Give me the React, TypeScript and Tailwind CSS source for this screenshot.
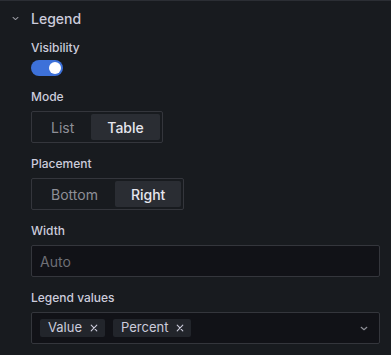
import React from "react";

function ChevronDown({ className }: { className?: string }) {
  return (
    <svg viewBox="0 0 10 6" className={className} fill="none" stroke="currentColor" strokeWidth={1.5} strokeLinecap="round" strokeLinejoin="round">
      <path d="M1.5 1.5 5 4.5 8.5 1.5" />
    </svg>
  );
}

function CloseIcon() {
  return (
    <svg viewBox="0 0 10 10" className="h-[8px] w-[8px]" fill="none" stroke="currentColor" strokeWidth={1.4} strokeLinecap="round">
      <path d="M1.5 1.5 8.5 8.5M8.5 1.5 1.5 8.5" />
    </svg>
  );
}

function Label({ children, tight }: { children: React.ReactNode; tight?: boolean }) {
  return (
    <div className={tight ? "mb-[4px] text-[12px] font-medium leading-[16px] text-[#ccccdc]" : "mb-[6px] text-[12px] font-medium leading-[16px] text-[#ccccdc]"}>
      {children}
    </div>
  );
}

function RadioGroup({ options, active }: { options: string[]; active: string }) {
  return (
    <div className="inline-flex h-[32px] items-center rounded-[2px] border border-[#34363c] p-[2px]">
      {options.map((o) => (
        <button
          key={o}
          type="button"
          className={
            o === active
              ? "h-[26px] rounded-[2px] bg-[#2a2d33] px-[16px] text-[14px] font-medium text-[#e6e6ee]"
              : "h-[26px] rounded-[2px] px-[17px] text-[14px] text-[#8e8f97]"
          }
        >
          {o}
        </button>
      ))}
    </div>
  );
}

function Chip({ label }: { label: string }) {
  return (
    <span className="flex h-[18px] items-center gap-[8px] rounded-[2px] bg-[#22252b] pl-[8px] pr-[7px] text-[13px] text-[#ccccdc]">
      {label}
      <CloseIcon />
    </span>
  );
}

export default function App() {
  return (
    <div className="h-[355px] w-[391px] overflow-hidden border-t border-[#2b2e34] bg-[#181b1f]" style={{ fontFamily: "Inter, 'Noto Sans', sans-serif" }}>
      <div className="flex h-[34px] items-center pl-[12px]">
        <ChevronDown className="h-[5px] w-[7px] text-[#9a9ba3]" />
        <span className="ml-[12px] text-[14px] font-medium text-[#ccccdc]">Legend</span>
      </div>

      <div className="flex flex-col gap-[13px] pl-[31px] pr-[11px] pt-[5px]">
        <div>
          <Label tight>Visibility</Label>
          <div className="flex h-[16px] w-[32px] items-center justify-end rounded-full bg-[#3d71d9] pr-[2px]">
            <span className="h-[12px] w-[12px] rounded-full bg-white" />
          </div>
        </div>

        <div>
          <Label>Mode</Label>
          <RadioGroup options={["List", "Table"]} active="Table" />
        </div>

        <div>
          <Label>Placement</Label>
          <RadioGroup options={["Bottom", "Right"]} active="Right" />
        </div>

        <div>
          <Label>Width</Label>
          <div className="flex h-[32px] items-center rounded-[2px] border border-[#34363c] bg-[#111217] px-[8px] text-[14px] text-[#6e6f76]">
            Auto
          </div>
        </div>

        <div>
          <Label>Legend values</Label>
          <div className="flex h-[32px] items-center gap-[8px] rounded-[2px] border border-[#34363c] bg-[#111217] pl-[8px] pr-[11px]">
            <Chip label="Value" />
            <Chip label="Percent" />
            <div className="flex-1" />
            <ChevronDown className="h-[5px] w-[8px] text-[#8e8f97]" />
          </div>
        </div>
      </div>
    </div>
  );
}
